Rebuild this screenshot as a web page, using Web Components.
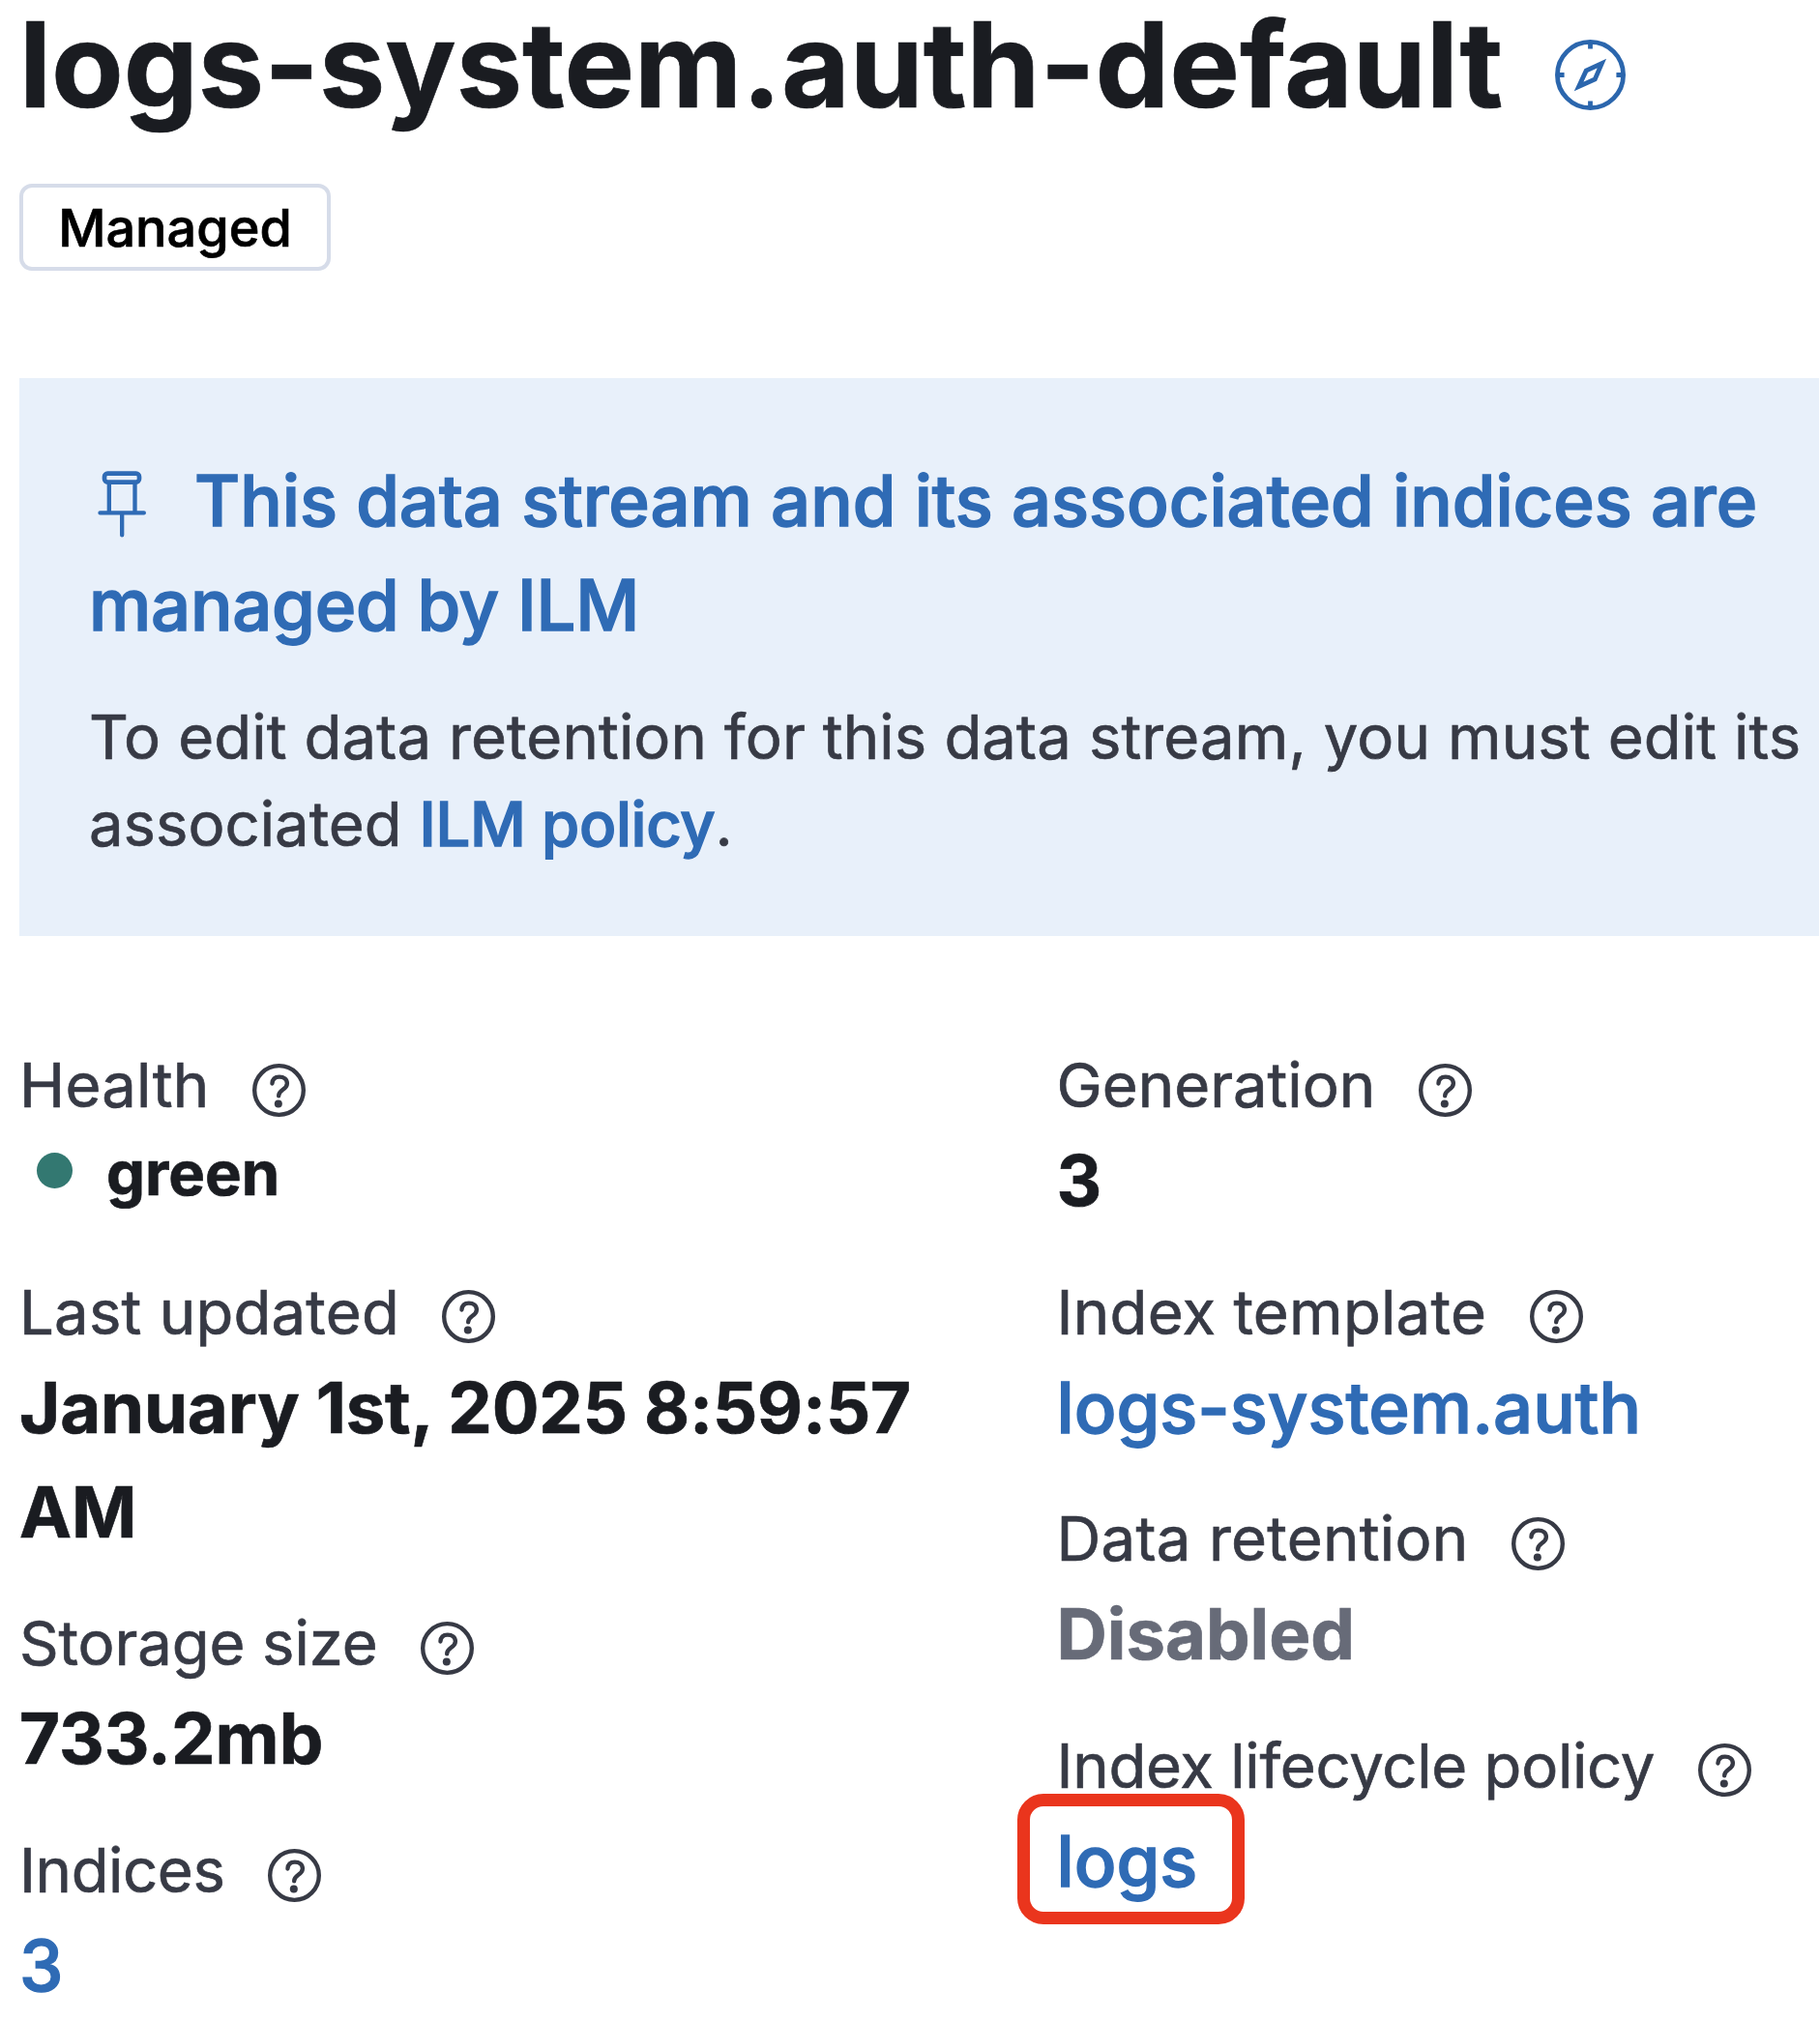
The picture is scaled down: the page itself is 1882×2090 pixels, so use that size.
<!DOCTYPE html>
<html lang="en">
<head>
<meta charset="utf-8">
<title>Data stream details</title>
<style>
html,body{margin:0;background:#fff}
body{font-family:Inter,"Liberation Sans",sans-serif;color:#373a45;-webkit-text-stroke-width:.7px;
--title:#1a1c21;--link:#2f6bb5;--subdued:#676b78;}
</style>
</head>
<body>
<stream-details></stream-details>
<script>
const define=(name,html,setup)=>customElements.define(name,class extends HTMLElement{
  connectedCallback(){
    if(this.shadowRoot)return;
    this.attachShadow({mode:'open'}).innerHTML=html;
    if(setup)setup(this,this.shadowRoot);
  }
});

define('icon-compass',`<style>:host{display:block;width:73px;height:73px;color:#2b66ad}svg{display:block}</style>
<svg width="73" height="73" viewBox="0 0 16 16" fill="none" stroke="currentColor" stroke-width="1.05"><circle cx="8" cy="8" r="7.47"/><path d="M8 .5V2.100M8 13.900v1.600M.5 8H2.100M13.900 8h1.600"/><path d="M10.6 5.4 9.050 8.95 5.4 10.6 7.050 7.050Z"/></svg>`);

define('icon-pin',`<style>:host{display:inline-block;width:72px;height:72px;vertical-align:-15.4px;margin-right:37px}svg{display:block}</style>
<svg width="72" height="72" viewBox="0 0 216 216" fill="none" stroke="currentColor" stroke-width="13" stroke-linecap="round"><rect x="48" y="8" width="108" height="27" rx="10" stroke-width="14"/><path stroke-linecap="butt" d="M62.500 38V130M142.500 38V130"/><path d="M34.500 130H170.500M102.500 132V199"/></svg>`);

define('icon-question',`<style>:host{display:block;width:55px;height:55px}svg{display:block}</style>
<svg width="55" height="55" viewBox="0 0 164 164" fill="none" stroke="currentColor"><circle cx="82" cy="82" r="75.500" stroke-width="13"/><path stroke-width="13" stroke-linecap="round" d="M61 61C62 46 72 40.500 83 40.500C97 40.500 107 48 107 61C107 80 81 80 81 99"/><circle cx="80" cy="124" r="12" fill="currentColor" stroke="none"/></svg>`);

define('details-title',`<style>:host{display:flex;align-items:flex-start;gap:54px;height:134px}
h2{margin:0;font-size:122px;line-height:134px;font-weight:700;letter-spacing:-.06px;color:var(--title);white-space:nowrap}
icon-compass{margin-top:41px}</style><h2><slot></slot></h2><icon-compass></icon-compass>`);

define('outline-badge',`<style>:host{display:inline-flex;box-sizing:border-box;width:322px;height:90px;align-items:center;justify-content:center;padding-top:2px;border:4.500px solid #d6dce9;border-radius:13px;font-size:54px;font-weight:500;line-height:80px;color:#000}</style><slot></slot>`);

define('info-callout',`<style>:host{display:block;box-sizing:border-box;height:576.500px;padding:73px 0 0 72px;background:#e8f0fa;white-space:nowrap}
.t{font-size:72.400px;line-height:108.400px;font-weight:500;letter-spacing:-.04px;-webkit-text-stroke-width:1.500px;color:var(--link);margin:0 0 36px}
.b{font-size:63.400px;line-height:90.300px;letter-spacing:.13px;margin:0}</style>
<p class="t"><icon-pin></icon-pin><slot name="title"></slot></p><p class="b"><slot></slot></p>`);

define('text-link',`<style>:host{display:inline;color:var(--link);font-weight:500;-webkit-text-stroke-width:1.400px;letter-spacing:var(--track,0)}</style><slot></slot>`);

define('health-status',`<style>:host{display:flex;align-items:center;height:108.300px;font-size:63.400px;line-height:90.300px}
.r{display:flex;align-items:center;height:90.300px;margin-bottom:17px}
i{width:37px;height:37px;border-radius:50%;background:#337871;margin:0 35px 4px 18px}</style><div class="r"><i></i><slot></slot></div>`);

define('marked-value',`<style>:host{display:inline-block;position:relative}
.m{position:absolute;left:-41px;top:-15.500px;width:235px;height:135px;box-sizing:border-box;border:13px solid #ea351d;border-radius:27px}</style><slot></slot><div class="m"></div>`);

define('detail-item',`<style>:host{display:block}
.l{display:flex;align-items:center;gap:44.500px;height:89.500px;font-size:63.400px;line-height:90.300px;white-space:nowrap}
icon-question{margin-top:10px}
.v{font-size:72.400px;line-height:108.300px;font-weight:700;color:var(--title)}</style>
<div class="l"><span></span><icon-question></icon-question></div><div class="v"><slot></slot></div>`,(el,r)=>{
  const s=r.querySelector('span');s.textContent=el.getAttribute('label');
  s.style.letterSpacing=(el.getAttribute('track')||0)+'px';
});

define('stream-details',`<style>:host{display:block;width:1882px;height:2090px;box-sizing:border-box;padding:0 1px 0 20px}
outline-badge{margin-top:56px}
info-callout{margin-top:111px}
.g{display:grid;grid-template-columns:1072.500px 1fr;margin-top:110.200px}
.c{display:flex;flex-direction:column;gap:36.650px}
.d{letter-spacing:-.15px}.s{color:var(--subdued)}.n{letter-spacing:-.25px}</style>
<details-title>logs-system.auth-default</details-title>
<div style="display:flex"><outline-badge>Managed</outline-badge></div>
<info-callout><span slot="title">This data stream and its associated indices are<br><span class="n">managed by ILM</span></span>To edit data retention for this data stream, you must edit its<br><span style="letter-spacing:0">associated </span><text-link style="--track:-.3px">ILM policy</text-link>.</info-callout>
<div class="g"><div class="c">
<detail-item label="Health" track=".28"><health-status>green</health-status></detail-item>
<detail-item label="Last updated" track=".24"><span class="d">January 1st, 2025 8:59:57<br>AM</span></detail-item>
<detail-item label="Storage size" track="-.1">733.2mb</detail-item>
<detail-item label="Indices" track="-.4"><text-link>3</text-link></detail-item>
</div><div class="c">
<detail-item label="Generation">3</detail-item>
<detail-item label="Index template" track=".28"><text-link>logs-system.auth</text-link></detail-item>
<detail-item label="Data retention" track=".32"><span class="s">Disabled</span></detail-item>
<detail-item label="Index lifecycle policy" track="-.26"><marked-value><text-link>logs</text-link></marked-value></detail-item>
</div></div>`);
</script>
</body>
</html>
